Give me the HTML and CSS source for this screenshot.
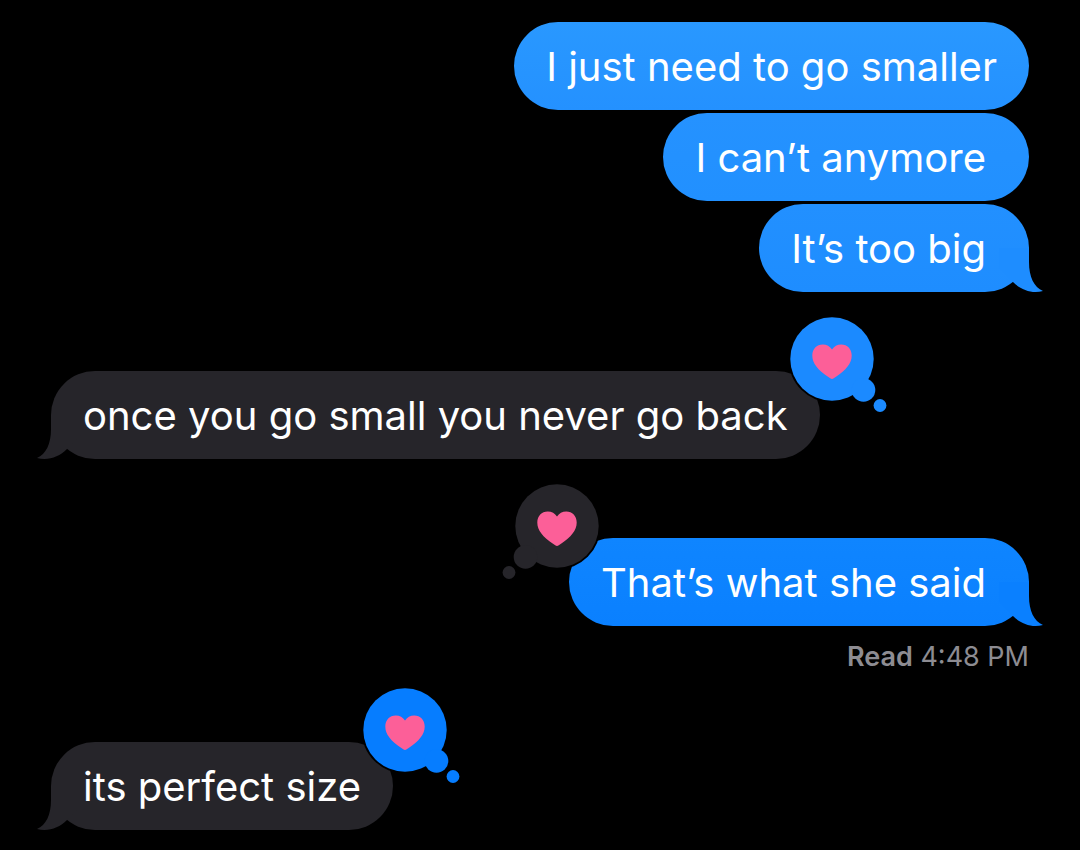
FILE: index.html
```html
<!DOCTYPE html>
<html lang="en">
<head>
  <meta charset="UTF-8">
  <meta name="viewport" content="width=device-width, initial-scale=1.0">
  <title>Messages</title>
  <link rel="stylesheet" href="styles.css">
</head>
<body>

  <!-- shared shapes -->
  <svg class="shapes" aria-hidden="true">
    <symbol id="tail" viewBox="0 0 44 44">
      <path d="M30 0V14C30 29 35 39 44 43C33 46 22 42 14 34L0 20V0Z"/>
    </symbol>
    <symbol id="thought" viewBox="0 0 100 100">
      <circle class="ring" cx="44" cy="44" r="43.5"/>
      <circle cx="44" cy="44" r="41.7"/>
      <circle cx="75.5" cy="75" r="11.8"/>
      <circle cx="92" cy="90.5" r="6.4"/>
    </symbol>
    <symbol id="heart" viewBox="0 0 40 36">
      <path d="M20 35C19 35 17.5 33.8 16 32.8C6 26 0.3 19.5 0.3 11.5C0.3 5 4.7 0.5 10.7 0.5C14.7 0.5 18 2.4 20 5.6C22 2.4 25.3 0.5 29.3 0.5C35.3 0.5 39.7 5 39.7 11.5C39.7 19.5 34 26 24 32.8C22.5 33.8 21 35 20 35Z"/>
    </symbol>
  </svg>

  <main class="chat">
    <div class="group sent">
      <div class="bubble blue-1">I just need to go smaller</div>
      <div class="bubble blue-2 spaced">I can’t anymore</div>
      <div class="bubble blue-3 spaced">It’s too big
        <svg class="tail" aria-hidden="true"><use href="#tail"/></svg>
      </div>
    </div>

    <div class="group received">
      <div class="bubble">once you go small you never go back
        <svg class="tail" aria-hidden="true"><use href="#tail"/></svg>
        <div class="reaction blue-4" role="img" aria-label="Loved">
          <svg class="thought"><use href="#thought"/></svg>
          <svg class="heart"><use href="#heart"/></svg>
        </div>
      </div>
    </div>

    <div class="group sent">
      <div class="bubble blue-5 spaced">That’s what she said
        <svg class="tail" aria-hidden="true"><use href="#tail"/></svg>
        <div class="reaction gray" role="img" aria-label="Loved">
          <svg class="thought"><use href="#thought"/></svg>
          <svg class="heart"><use href="#heart"/></svg>
        </div>
      </div>
      <p class="status"><b>Read</b> 4:48 PM</p>
    </div>

    <div class="group received">
      <div class="bubble">its perfect size
        <svg class="tail" aria-hidden="true"><use href="#tail"/></svg>
        <div class="reaction blue-6" role="img" aria-label="Loved">
          <svg class="thought"><use href="#thought"/></svg>
          <svg class="heart"><use href="#heart"/></svg>
        </div>
      </div>
    </div>
  </main>

</body>
</html>
```
FILE: styles.css
```css
* {
  box-sizing: border-box;
}

body {
  margin: 0;
  background: #000;
  color: #fff;
  font-family: Inter, "Liberation Sans", sans-serif;
}

.shapes {
  position: absolute;
  width: 0;
  height: 0;
}

.chat {
  display: flex;
  flex-direction: column;
  gap: 79px;
  padding: 22px 51px 20px;
}

.group {
  display: flex;
  flex-direction: column;
  gap: 3px;
}

.sent {
  align-items: flex-end;
}

.received {
  align-items: flex-start;
}

.bubble {
  --fill: #26252a;
  position: relative;
  padding: 19px 32px 17px;
  border-radius: 44px;
  background: var(--fill);
  font-size: 40px;
  line-height: 52px;
}

.bubble.spaced {
  padding-right: 43px;
}

/* sent bubbles get deeper further down the thread */
.bubble.blue-1 {
  background: linear-gradient(#2998ff, #2491ff);
}

.bubble.blue-2 {
  background: linear-gradient(#2592ff, #2190ff);
}

.bubble.blue-3 {
  --fill: #1e8dff;
  background: linear-gradient(#2290ff, #1e8dff);
}

.bubble.blue-5 {
  --fill: #0a80ff;
  background: linear-gradient(#0f85ff, #0a80ff);
}

.tail {
  position: absolute;
  right: -14px;
  bottom: 0;
  width: 44px;
  height: 44px;
  fill: var(--fill);
}

.received .tail {
  right: auto;
  left: -14px;
  transform: scaleX(-1);
}

.reaction {
  position: absolute;
  top: -56px;
  width: 100px;
  height: 100px;
}

.received .reaction {
  right: -68px;
}

.sent .reaction {
  left: -68px;
  transform: scaleX(-1);
}

.reaction.blue-4 {
  fill: #1b8aff;
}

.reaction.gray {
  fill: #26252a;
}

.reaction.blue-6 {
  fill: #067dff;
}

.thought {
  display: block;
  width: 100px;
  height: 100px;
}

.ring {
  fill: #000;
}

.heart {
  position: absolute;
  top: 29px;
  left: 24px;
  width: 40px;
  height: 36px;
  fill: #fc5f98;
}

.status {
  margin: 12px 0 -10px;
  color: #8d8c92;
  font-size: 27px;
  line-height: 32px;
}

.status b {
  font-weight: 600;
}
```
